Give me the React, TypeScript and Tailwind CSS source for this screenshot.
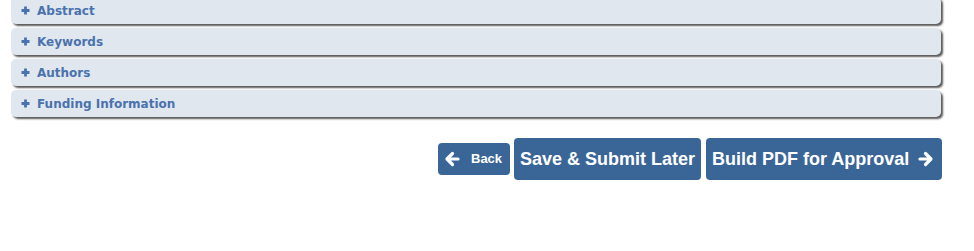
import React from 'react';

const sections = ['Abstract', 'Keywords', 'Authors', 'Funding Information'];

const Plus = () => (
  <svg width="9" height="9" viewBox="0 0 9 9" className="shrink-0">
    <path d="M4.5 0.5v8M0.5 4.5h8" stroke="#4a72ad" strokeWidth="2.8" />
  </svg>
);

const Arrow = ({ dir }: { dir: 'left' | 'right' }) => (
  <svg width="16" height="16" viewBox="0 0 16 16" className={dir === 'left' ? '' : 'rotate-180'}>
    <path d="M14 8H3.5M8.5 2.5L3 8l5.5 5.5" fill="none" stroke="#fff" strokeWidth="3.2" strokeLinecap="round" strokeLinejoin="round" />
  </svg>
);

const App: React.FC = () => {
  return (
    <div className="w-[974px] h-[251px] bg-white overflow-hidden font-['Liberation_Sans',Arial,sans-serif]">
      <div className="-mt-[3px] ml-[11px] w-[930px] flex flex-col gap-[4px]">
        {sections.map((s) => (
          <div
            key={s}
            className="h-[27px] bg-[#e1e7ef] rounded-[5px] shadow-[2px_2px_2px_rgba(60,60,60,0.85)] flex items-center gap-[7px] pl-[10px]"
          >
            <Plus />
            <span className="font-['DejaVu_Sans',Verdana,sans-serif] font-bold text-[12px] text-[#4a72ad]">{s}</span>
          </div>
        ))}
      </div>

      <div className="mt-[21px] w-[942px] flex justify-end items-center">
        <button className="h-[32px] w-[72px] bg-[#3a6697] rounded-[4px] text-white font-bold text-[13px] flex items-center pl-[6px] gap-[11px]">
          <Arrow dir="left" />
          <span>Back</span>
        </button>
        <button className="ml-[4px] h-[42px] w-[187px] bg-[#3a6697] rounded-[4px] text-white font-bold text-[18px] flex items-center justify-center">
          Save &amp; Submit Later
        </button>
        <button className="ml-[5px] h-[42px] w-[236px] bg-[#3a6697] rounded-[4px] text-white font-bold text-[18px] flex items-center pl-[6px] gap-[9px]">
          <span>Build PDF for Approval</span>
          <Arrow dir="right" />
        </button>
      </div>
    </div>
  );
};

export default App;
